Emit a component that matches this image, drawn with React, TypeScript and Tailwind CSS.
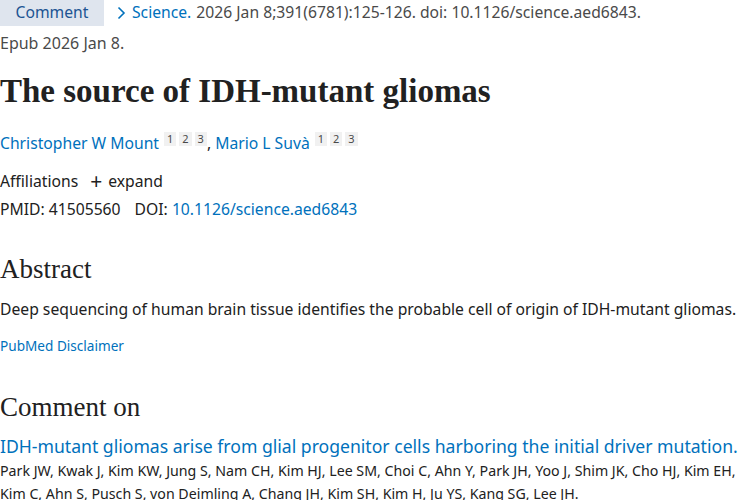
const sans = "font-['Noto_Sans',sans-serif]";
const serif = "font-['Liberation_Serif',serif]";

const Sup = ({ n }: { n: string }) => (
  <span className="inline-block bg-[#f1f1f1] text-[#4a4a4a] text-[11px] leading-[14px] px-[3px] ml-[3px] align-[6px]">
    {n}
  </span>
);

const Author = ({ name }: { name: string }) => (
  <span>
    <a className="text-[#0071bc]">{name}</a>
    <span className="ml-[2px]">
      <Sup n="1" />
      <Sup n="2" />
      <Sup n="3" />
    </span>
  </span>
);

export default function App() {
  return (
    <div className={`${sans} w-[750px] h-[500px] overflow-hidden bg-white text-[#212121]`}>
      <div className="flex items-center h-[26px] text-[15.7px]">
        <span className="bg-[#dfe5ee] text-[#205493] h-[26px] w-[104px] flex items-center justify-center">
          Comment
        </span>
        <svg className="ml-[13px]" width="9" height="14" viewBox="0 0 9 14" fill="none">
          <path d="M1.5 1.5 L7 7 L1.5 12.5" stroke="#0071bc" strokeWidth="1.6" />
        </svg>
        <span className="ml-[6px] text-[#0071bc]">Science.</span>
        <span className="ml-[5px] text-[#4a4a4a]">2026 Jan 8;391(6781):125-126. doi: 10.1126/science.aed6843.</span>
      </div>
      <div className="text-[16px] text-[#4a4a4a] mt-[6px] leading-[22px]">Epub 2026 Jan 8.</div>

      <h1 className={`${serif} font-bold text-[33px] leading-[40px] mt-[17px]`}>
        The source of IDH-mutant gliomas
      </h1>

      <div className="text-[15.7px] mt-[20px] leading-[24px]">
        <Author name="Christopher W Mount" />
        <span>, </span>
        <Author name="Mario L Suvà" />
      </div>

      <div className="text-[15.7px] mt-[14px] leading-[24px] flex items-center">
        <span>Affiliations</span>
        <span className="ml-[12px] text-[21px] leading-none">+</span>
        <span className="ml-[6px]">expand</span>
      </div>
      <div className="text-[15.7px] mt-[4px] leading-[24px]">
        <span>PMID: 41505560</span>
        <span className="ml-[14px]">DOI: </span>
        <a className="text-[#0071bc]">10.1126/science.aed6843</a>
      </div>

      <h2 className={`${serif} text-[27px] leading-[34px] mt-[31px]`}>Abstract</h2>
      <p className="text-[15.7px] leading-[24px] mt-[11px]">
        Deep sequencing of human brain tissue identifies the probable cell of origin of IDH-mutant gliomas.
      </p>
      <a className="block text-[13.6px] leading-[20px] mt-[15px] text-[#0071bc]">PubMed Disclaimer</a>

      <h2 className={`${serif} text-[27px] leading-[34px] mt-[34px]`}>Comment on</h2>
      <a className="block text-[17.6px] leading-[26px] mt-[9px] text-[#0071bc] whitespace-nowrap">
        IDH-mutant gliomas arise from glial progenitor cells harboring the initial driver mutation.
      </a>
      <p className="text-[14.2px] leading-[23px] whitespace-nowrap">
        Park JW, Kwak J, Kim KW, Jung S, Nam CH, Kim HJ, Lee SM, Choi C, Ahn Y, Park JH, Yoo J, Shim JK, Cho HJ, Kim EH,
        <br />
        Kim C, Ahn S, Pusch S, von Deimling A, Chang JH, Kim SH, Kim H, Ju YS, Kang SG, Lee JH.
      </p>
    </div>
  );
}
